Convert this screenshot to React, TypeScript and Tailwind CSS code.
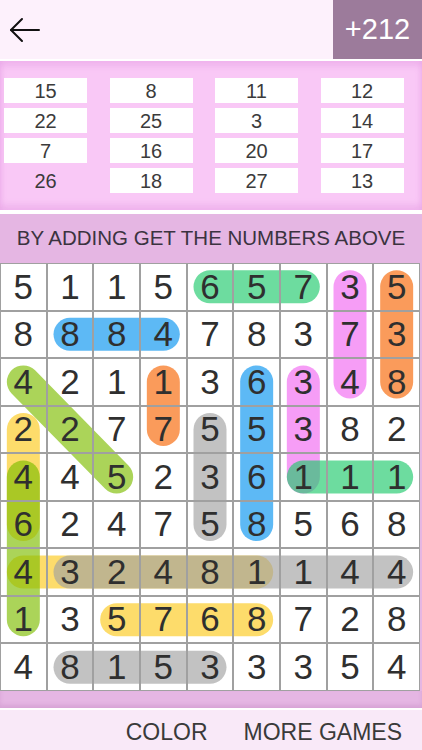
import React from 'react'

const FONT = { fontFamily: '"Liberation Sans", Arial, sans-serif' }

const targets = [
  [15, 8, 11, 12],
  [22, 25, 3, 14],
  [7, 16, 20, 17],
  [26, 18, 27, 13],
]

// 26 has already been found, so it has no white box
const found = [26]

const board = [
  [5, 1, 1, 5, 6, 5, 7, 3, 5],
  [8, 8, 8, 4, 7, 8, 3, 7, 3],
  [4, 2, 1, 1, 3, 6, 3, 4, 8],
  [2, 2, 7, 7, 5, 5, 3, 8, 2],
  [4, 4, 5, 2, 3, 6, 1, 1, 1],
  [6, 2, 4, 7, 5, 8, 5, 6, 8],
  [4, 3, 2, 4, 8, 1, 1, 4, 4],
  [1, 3, 5, 7, 6, 8, 7, 2, 8],
  [4, 8, 1, 5, 3, 3, 3, 5, 4],
]

const GREEN = '#1ec96b'
const PINK = '#f168f1'
const ORANGE = '#f76503'
const BLUE = '#0693f0'
const LIME = '#7ebd00'
const YELLOW = '#fcc91b'
const GRAY = '#a1a1a1'

// [col, row] from -> to; later ones sit on top
const strokes: { a: [number, number]; b: [number, number]; color: string }[] = [
  { a: [4, 0], b: [6, 0], color: GREEN },
  { a: [7, 0], b: [7, 2], color: PINK },
  { a: [8, 0], b: [8, 2], color: ORANGE },
  { a: [1, 1], b: [3, 1], color: BLUE },
  { a: [0, 2], b: [2, 4], color: LIME },
  { a: [3, 2], b: [3, 3], color: ORANGE },
  { a: [4, 3], b: [4, 5], color: GRAY },
  { a: [5, 2], b: [5, 5], color: BLUE },
  { a: [6, 2], b: [6, 4], color: PINK },
  { a: [6, 4], b: [8, 4], color: GREEN },
  { a: [0, 3], b: [0, 5], color: YELLOW },
  { a: [0, 6], b: [5, 6], color: YELLOW },
  { a: [0, 4], b: [0, 7], color: LIME },
  { a: [1, 6], b: [8, 6], color: GRAY },
  { a: [2, 7], b: [5, 7], color: YELLOW },
  { a: [1, 8], b: [4, 8], color: GRAY },
]

const CW = 420 / 9
const CH = 428 / 9
const cx = (c: number) => c * CW + CW / 2
const cy = (r: number) => r * CH + CH / 2

function BackArrow() {
  return (
    <svg width="32" height="26" viewBox="0 0 32 26" fill="none" stroke="#111" strokeWidth="2" strokeLinecap="round">
      <path d="M2 13 H30" />
      <path d="M13 2 L2 13 L13 24" strokeLinejoin="round" />
    </svg>
  )
}

export default function App() {
  return (
    <div className="w-[422px] h-[750px] bg-white flex flex-col overflow-hidden" style={FONT}>
      {/* header */}
      <div className="h-[59px] bg-[#fdf1fc] flex items-stretch justify-between">
        <button className="pl-[9px] pr-4 flex items-center">
          <BackArrow />
        </button>
        <div className="w-[89px] bg-[#9c7b9b] text-white text-[29px] flex items-center justify-center">
          +212
        </div>
      </div>

      {/* targets */}
      <div className="mt-[2px] h-[149px] bg-[#f9c8f6] shadow-[inset_0_5px_6px_rgba(210,120,210,0.25),inset_0_-5px_6px_rgba(210,120,210,0.25)] grid grid-cols-4 content-center gap-y-[5px]">
        {targets.flat().map((n, i) => (
          <div key={i} className="pl-[4px]">
            <div
              className={`w-[83px] h-[25px] flex items-center justify-center text-[20px] text-[#3b3b3b] ${
                found.includes(n) ? '' : 'bg-white'
              }`}
            >
              {n}
            </div>
          </div>
        ))}
      </div>

      {/* instruction */}
      <div className="mt-[4px] h-[49px] bg-[#e5b6e3] flex items-center justify-center text-[20.5px] text-[#3b3340]">
        BY ADDING GET THE NUMBERS ABOVE
      </div>

      {/* board */}
      <div className="bg-[#e5b6e3]">
        <div className="relative w-[420px] h-[428px] bg-white grid grid-cols-9 grid-rows-9">
          <svg className="absolute inset-0 pointer-events-none" width="420" height="428" viewBox="0 0 420 428">
            {strokes.map((s, i) => (
              <line
                key={i}
                x1={cx(s.a[0])}
                y1={cy(s.a[1])}
                x2={cx(s.b[0])}
                y2={cy(s.b[1])}
                stroke={s.color}
                strokeOpacity="0.65"
                strokeWidth="33"
                strokeLinecap="round"
              />
            ))}
          </svg>
          {board.flat().map((n, i) => (
            <div
              key={i}
              className="relative border-[1px] border-[#a0a0a0] flex items-center justify-center text-[35px] text-[#2f2f2f]"
            >
              {n}
            </div>
          ))}
        </div>
      </div>

      <div className="h-[17px] bg-[#e5b6e3] shadow-[inset_0_-3px_4px_rgba(160,90,160,0.2)]" />

      {/* footer */}
      <div className="mt-[2px] flex-1 bg-[#f9e9f8] flex items-center justify-end gap-[36px] pr-[20px] pt-[4px] text-[23px] text-[#3a3a3a]">
        <span>COLOR</span>
        <span>MORE GAMES</span>
      </div>
    </div>
  )
}
